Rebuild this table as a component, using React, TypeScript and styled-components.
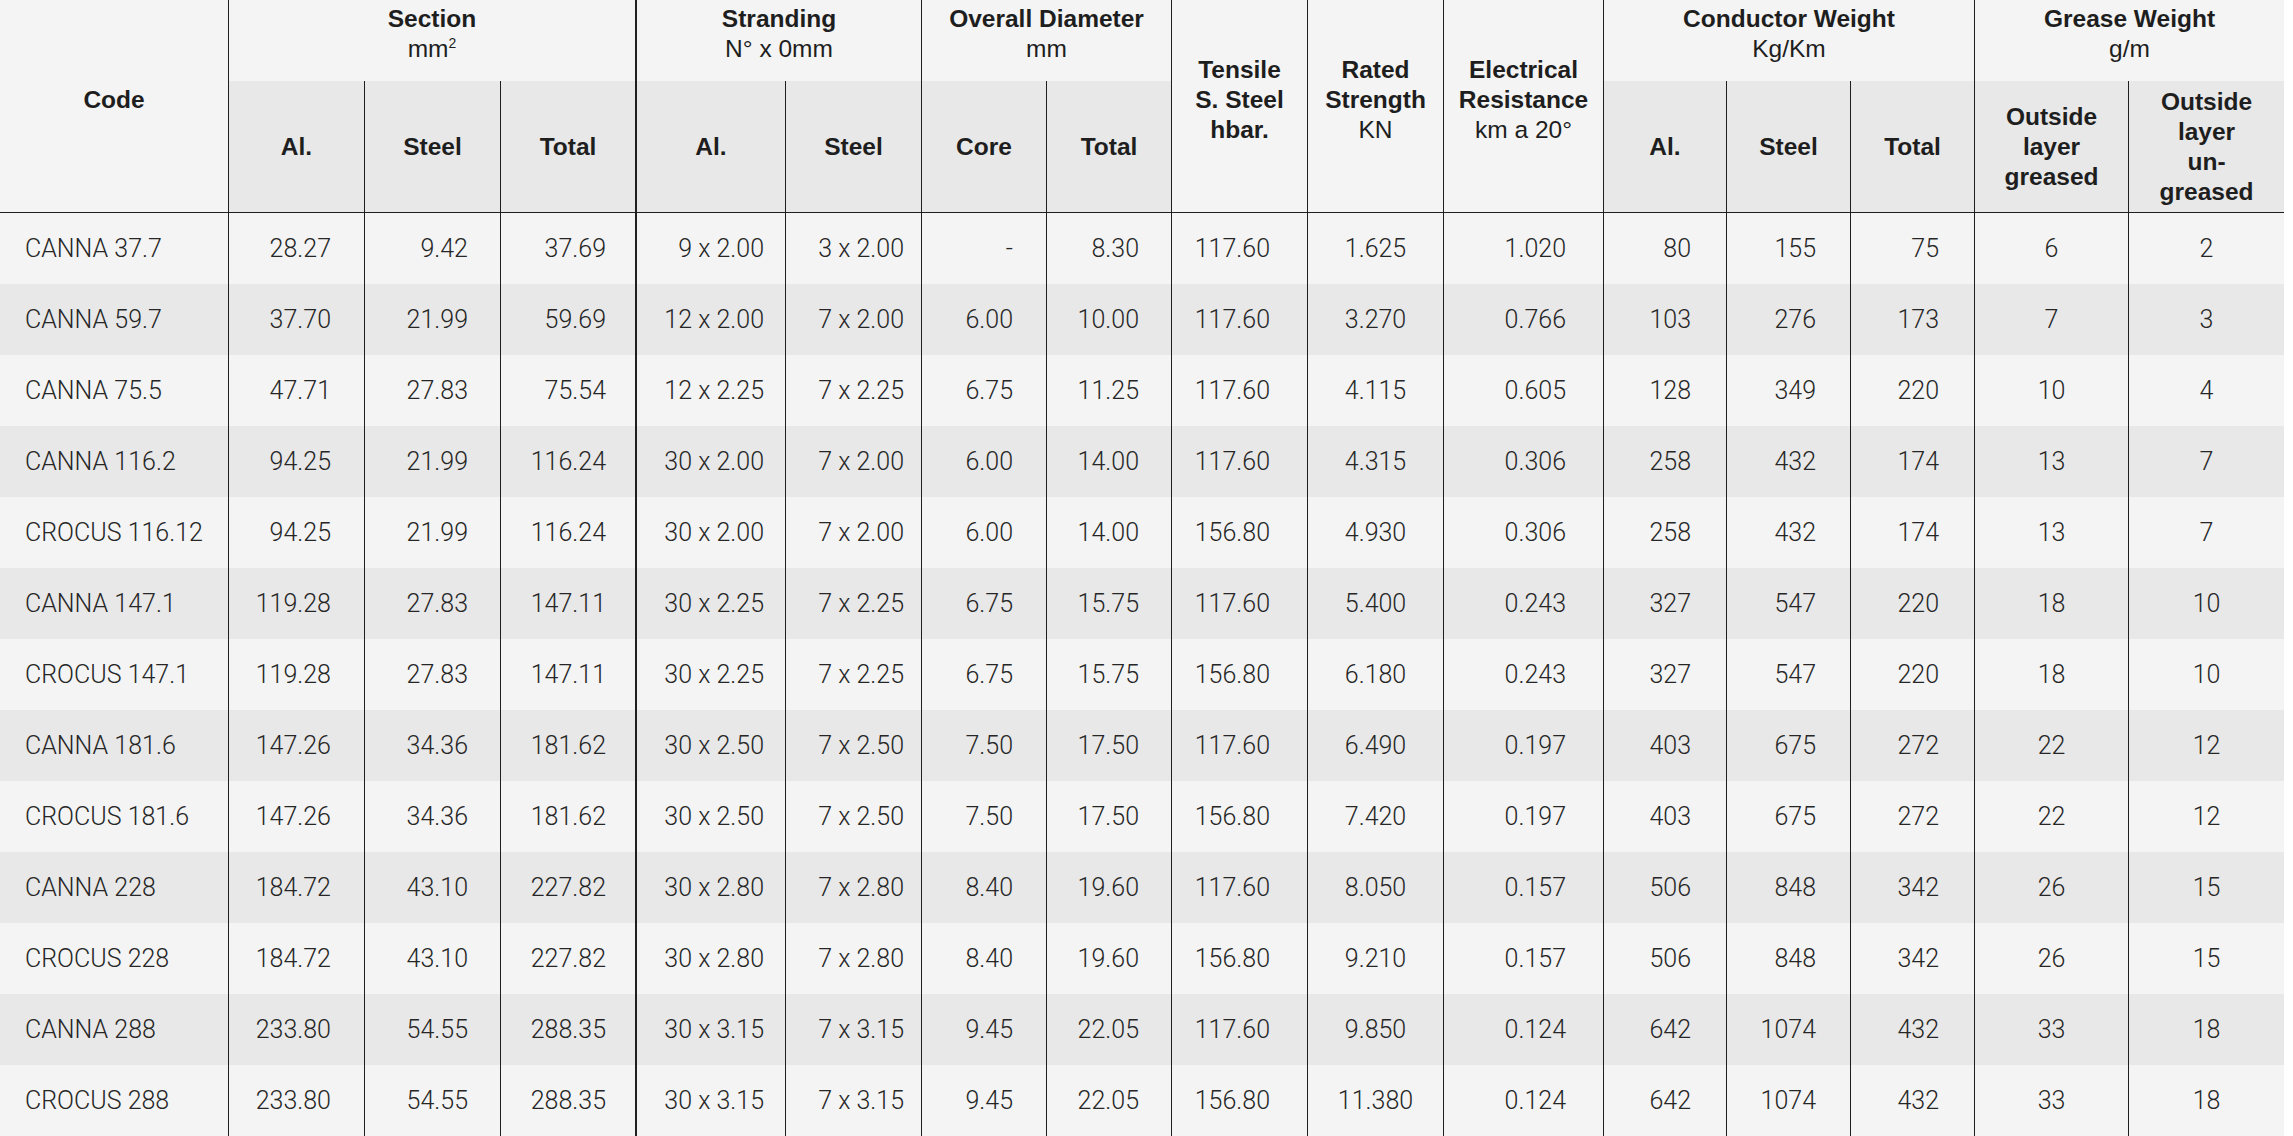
import React from 'react';
import styled, { createGlobalStyle, css } from 'styled-components';

type Align = 'left' | 'right' | 'center';

interface Column {
  width: number;
  align: Align;
  pad: number;
  thick?: boolean;
}

const GlobalStyle = createGlobalStyle`
  html, body {
    margin: 0;
    padding: 0;
    background: #ffffff;
  }
`;

const columns: Column[] = [
  { width: 228, align: 'left', pad: 25 },
  { width: 136, align: 'right', pad: 33 },
  { width: 136, align: 'right', pad: 32 },
  { width: 135, align: 'right', pad: 29 },
  { width: 150, align: 'right', pad: 21, thick: true },
  { width: 136, align: 'right', pad: 17 },
  { width: 125, align: 'right', pad: 33 },
  { width: 125, align: 'right', pad: 32 },
  { width: 136, align: 'right', pad: 37 },
  { width: 136, align: 'center', pad: 0 },
  { width: 160, align: 'right', pad: 37 },
  { width: 123, align: 'right', pad: 35 },
  { width: 124, align: 'right', pad: 34 },
  { width: 124, align: 'right', pad: 35 },
  { width: 154, align: 'center', pad: 0 },
  { width: 156, align: 'center', pad: 0 },
];

const rows: string[][] = [
  ['CANNA 37.7', '28.27', '9.42', '37.69', '9 x 2.00', '3 x 2.00', '-', '8.30', '117.60', '1.625', '1.020', '80', '155', '75', '6', '2'],
  ['CANNA 59.7', '37.70', '21.99', '59.69', '12 x 2.00', '7 x 2.00', '6.00', '10.00', '117.60', '3.270', '0.766', '103', '276', '173', '7', '3'],
  ['CANNA 75.5', '47.71', '27.83', '75.54', '12 x 2.25', '7 x 2.25', '6.75', '11.25', '117.60', '4.115', '0.605', '128', '349', '220', '10', '4'],
  ['CANNA 116.2', '94.25', '21.99', '116.24', '30 x 2.00', '7 x 2.00', '6.00', '14.00', '117.60', '4.315', '0.306', '258', '432', '174', '13', '7'],
  ['CROCUS 116.12', '94.25', '21.99', '116.24', '30 x 2.00', '7 x 2.00', '6.00', '14.00', '156.80', '4.930', '0.306', '258', '432', '174', '13', '7'],
  ['CANNA 147.1', '119.28', '27.83', '147.11', '30 x 2.25', '7 x 2.25', '6.75', '15.75', '117.60', '5.400', '0.243', '327', '547', '220', '18', '10'],
  ['CROCUS 147.1', '119.28', '27.83', '147.11', '30 x 2.25', '7 x 2.25', '6.75', '15.75', '156.80', '6.180', '0.243', '327', '547', '220', '18', '10'],
  ['CANNA 181.6', '147.26', '34.36', '181.62', '30 x 2.50', '7 x 2.50', '7.50', '17.50', '117.60', '6.490', '0.197', '403', '675', '272', '22', '12'],
  ['CROCUS 181.6', '147.26', '34.36', '181.62', '30 x 2.50', '7 x 2.50', '7.50', '17.50', '156.80', '7.420', '0.197', '403', '675', '272', '22', '12'],
  ['CANNA 228', '184.72', '43.10', '227.82', '30 x 2.80', '7 x 2.80', '8.40', '19.60', '117.60', '8.050', '0.157', '506', '848', '342', '26', '15'],
  ['CROCUS 228', '184.72', '43.10', '227.82', '30 x 2.80', '7 x 2.80', '8.40', '19.60', '156.80', '9.210', '0.157', '506', '848', '342', '26', '15'],
  ['CANNA 288', '233.80', '54.55', '288.35', '30 x 3.15', '7 x 3.15', '9.45', '22.05', '117.60', '9.850', '0.124', '642', '1074', '432', '33', '18'],
  ['CROCUS 288', '233.80', '54.55', '288.35', '30 x 3.15', '7 x 3.15', '9.45', '22.05', '156.80', '11.380', '0.124', '642', '1074', '432', '33', '18'],
];

const LINE = '#1f1f1f';

const Table = styled.table`
  width: 2284px;
  table-layout: fixed;
  border-collapse: separate;
  border-spacing: 0;
  color: #1e1e1e;
`;

const border = css<{ $first?: boolean; $thick?: boolean }>`
  border-left: ${p => (p.$first ? 'none' : `${p.$thick ? 2 : 1}px solid ${LINE}`)};
`;

const GroupRow = styled.tr`
  height: 81px;
`;

const SubRow = styled.tr`
  height: 132px;
`;

const HeadBase = styled.th<{ $first?: boolean; $thick?: boolean }>`
  ${border};
  padding: 0;
  font-family: 'Liberation Sans', Arial, sans-serif;
  font-weight: 700;
  font-size: 24.5px;
  line-height: 30px;
  text-align: center;
`;

const GroupHead = styled(HeadBase)`
  background: #f4f4f4;
  vertical-align: top;
  padding-top: 4px;
`;

const SpanHead = styled(HeadBase)`
  background: #f4f4f4;
  vertical-align: middle;
  padding-bottom: 13px;
  border-bottom: 1px solid ${LINE};
`;

const SubHead = styled(HeadBase)`
  background: #e8e8e8;
  vertical-align: middle;
  border-bottom: 1px solid ${LINE};
`;

const Unit = styled.span`
  display: block;
  font-weight: 400;
`;

const Sup = styled.sup`
  font-size: 14px;
  line-height: 0;
  vertical-align: 9px;
`;

const BodyRow = styled.tr<{ $alt: boolean }>`
  height: 71px;
  background: ${p => (p.$alt ? '#e8e8e8' : '#f4f4f4')};
`;

const Cell = styled.td<{ $first?: boolean; $thick?: boolean; $align: Align; $pad: number }>`
  ${border};
  padding: 0;
  text-align: ${p => p.$align};
  padding-left: ${p => (p.$align === 'left' ? p.$pad : 0)}px;
  padding-right: ${p => (p.$align === 'right' ? p.$pad : 0)}px;
  font-family: Roboto, 'Liberation Sans', sans-serif;
  font-weight: 300;
  font-size: 25px;
  color: #262626;
  white-space: nowrap;
  vertical-align: middle;
`;

const groups = [
  { title: 'Section', unit: <>mm<Sup>2</Sup></>, span: 3 },
  { title: 'Stranding', unit: <>N° x 0mm</>, span: 2, thick: true },
  { title: 'Overall Diameter', unit: <>mm</>, span: 2 },
];

const subHeads: React.ReactNode[] = [
  'Al.', 'Steel', 'Total',
  'Al.', 'Steel',
  'Core', 'Total',
  'Al.', 'Steel', 'Total',
  <>Outside<br />layer<br />greased</>,
  <>Outside<br />layer<br />un-<br />greased</>,
];

export default function App() {
  return (
    <>
      <GlobalStyle />
      <Table>
        <colgroup>
          {columns.map((c, i) => (
            <col key={i} style={{ width: c.width }} />
          ))}
        </colgroup>
        <thead>
          <GroupRow>
            <SpanHead rowSpan={2} $first>Code</SpanHead>
            {groups.map(g => (
              <GroupHead key={g.title} colSpan={g.span} $thick={g.thick}>
                {g.title}
                <Unit>{g.unit}</Unit>
              </GroupHead>
            ))}
            <SpanHead rowSpan={2}>Tensile<br />S. Steel<br />hbar.</SpanHead>
            <SpanHead rowSpan={2}>Rated<br />Strength<Unit>KN</Unit></SpanHead>
            <SpanHead rowSpan={2}>Electrical<br />Resistance<Unit>km a 20°</Unit></SpanHead>
            <GroupHead colSpan={3}>
              Conductor Weight
              <Unit>Kg/Km</Unit>
            </GroupHead>
            <GroupHead colSpan={2}>
              Grease Weight
              <Unit>g/m</Unit>
            </GroupHead>
          </GroupRow>
          <SubRow>
            {subHeads.map((s, i) => (
              <SubHead key={i} $thick={i === 3}>{s}</SubHead>
            ))}
          </SubRow>
        </thead>
        <tbody>
          {rows.map((r, ri) => (
            <BodyRow key={ri} $alt={ri % 2 === 1}>
              {r.map((v, ci) => (
                <Cell
                  key={ci}
                  $first={ci === 0}
                  $thick={columns[ci].thick}
                  $align={columns[ci].align}
                  $pad={columns[ci].pad}
                >
                  {v}
                </Cell>
              ))}
            </BodyRow>
          ))}
        </tbody>
      </Table>
    </>
  );
}
